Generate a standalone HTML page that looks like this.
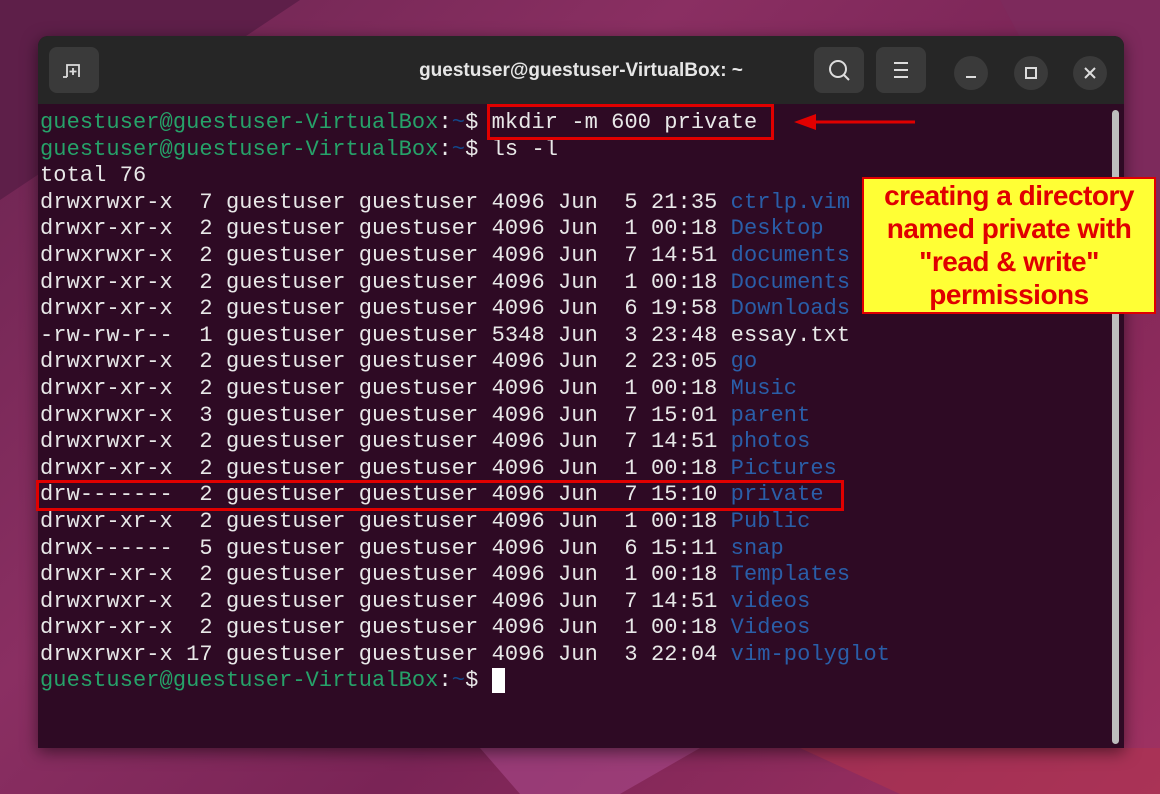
<!DOCTYPE html>
<html><head><meta charset="utf-8"><style>
html,body{margin:0;padding:0;width:1160px;height:794px;overflow:hidden}
body{background:linear-gradient(135deg,#6a2450 0%,#8a2f62 35%,#7a2456 60%,#a03262 100%);position:relative;font-family:"Liberation Sans",sans-serif}
.shape{position:absolute}
.win{position:absolute;left:38px;top:36px;width:1086px;height:712px;background:#2e0a24;border-radius:10px 10px 0 0;overflow:hidden;box-shadow:0 4px 16px rgba(0,0,0,.5)}
.hdr{position:absolute;left:0;top:0;width:100%;height:68px;background:#262626}
.btn{position:absolute;top:11px;width:50px;height:46px;background:#3a3a3a;border-radius:8px}
.cb{position:absolute;top:20px;width:34px;height:34px;border-radius:50%;background:#3a3a3a}
.title{position:absolute;left:0;width:100%;top:24px;text-align:center;color:#e6e6e6;font-weight:bold;font-size:19px}
pre{position:absolute;left:2px;top:74px;margin:0;font-family:"Liberation Mono",monospace;font-size:22px;letter-spacing:0.08px;line-height:26.6px;color:#e8e8e8}
.g{color:#26a269}.b{color:#12488b}.bl{color:#2a5ea8}
.scroll{position:absolute;left:1074px;top:74px;width:7px;height:634px;background:#bdbdbd;border-radius:4px}
.rb{position:absolute;border:3px solid #e00000}
.note{position:absolute;left:862px;top:177px;width:294px;height:137px;background:#ffff35;border:2px solid #e00000;color:#e00000;font-weight:bold;font-size:28px;line-height:33px;text-align:center;letter-spacing:-0.5px;font-family:"Liberation Sans Narrow","Liberation Sans",sans-serif;padding-top:0px;box-sizing:border-box}
</style></head><body>
<svg class="shape" width="1160" height="794" style="left:0;top:0">
<polygon points="0,0 300,0 0,200" fill="#5e1f49"/>
<polygon points="1160,0 1160,300 1000,0" fill="#7d2a5c"/>
<polygon points="480,748 700,748 620,794 520,794" fill="#a84a8a" opacity=".6"/>
<polygon points="800,748 1160,748 1160,794 900,794" fill="#b0344f" opacity=".6"/>
</svg>
<div class="win">
<div class="hdr">
<div class="btn" style="left:11px"><svg width="50" height="46"><path d="M18 30 V18 H30 V30" fill="none" stroke="#ddd" stroke-width="1.8"/><path d="M14 30h4M24 21v7M20.5 24.5h7" stroke="#ddd" stroke-width="1.8"/></svg></div>
<div class="title">guestuser@guestuser-VirtualBox: ~</div>
<div class="btn" style="left:776px"><svg width="50" height="46"><circle cx="24" cy="22" r="8" fill="none" stroke="#ddd" stroke-width="2"/><path d="M30 28l5 5" stroke="#ddd" stroke-width="2"/></svg></div>
<div class="btn" style="left:838px"><svg width="50" height="46"><path d="M18 16h14M18 23h14M18 30h14" stroke="#ddd" stroke-width="2"/></svg></div>
<div class="cb" style="left:916px"><svg width="34" height="34"><path d="M12 21h10" stroke="#ddd" stroke-width="2"/></svg></div>
<div class="cb" style="left:976px"><svg width="34" height="34"><rect x="12" y="12" width="10" height="10" fill="none" stroke="#ddd" stroke-width="2"/></svg></div>
<div class="cb" style="left:1035px"><svg width="34" height="34"><path d="M12 12l10 10M22 12l-10 10" stroke="#ddd" stroke-width="2"/></svg></div>
</div>
<pre><span class="g">guestuser@guestuser-VirtualBox</span>:<span class="b">~</span>$ mkdir -m 600 private
<span class="g">guestuser@guestuser-VirtualBox</span>:<span class="b">~</span>$ ls -l
total 76
drwxrwxr-x  7 guestuser guestuser 4096 Jun  5 21:35 <span class="bl">ctrlp.vim</span>
drwxr-xr-x  2 guestuser guestuser 4096 Jun  1 00:18 <span class="bl">Desktop</span>
drwxrwxr-x  2 guestuser guestuser 4096 Jun  7 14:51 <span class="bl">documents</span>
drwxr-xr-x  2 guestuser guestuser 4096 Jun  1 00:18 <span class="bl">Documents</span>
drwxr-xr-x  2 guestuser guestuser 4096 Jun  6 19:58 <span class="bl">Downloads</span>
-rw-rw-r--  1 guestuser guestuser 5348 Jun  3 23:48 essay.txt
drwxrwxr-x  2 guestuser guestuser 4096 Jun  2 23:05 <span class="bl">go</span>
drwxr-xr-x  2 guestuser guestuser 4096 Jun  1 00:18 <span class="bl">Music</span>
drwxrwxr-x  3 guestuser guestuser 4096 Jun  7 15:01 <span class="bl">parent</span>
drwxrwxr-x  2 guestuser guestuser 4096 Jun  7 14:51 <span class="bl">photos</span>
drwxr-xr-x  2 guestuser guestuser 4096 Jun  1 00:18 <span class="bl">Pictures</span>
drw-------  2 guestuser guestuser 4096 Jun  7 15:10 <span class="bl">private</span>
drwxr-xr-x  2 guestuser guestuser 4096 Jun  1 00:18 <span class="bl">Public</span>
drwx------  5 guestuser guestuser 4096 Jun  6 15:11 <span class="bl">snap</span>
drwxr-xr-x  2 guestuser guestuser 4096 Jun  1 00:18 <span class="bl">Templates</span>
drwxrwxr-x  2 guestuser guestuser 4096 Jun  7 14:51 <span class="bl">videos</span>
drwxr-xr-x  2 guestuser guestuser 4096 Jun  1 00:18 <span class="bl">Videos</span>
drwxrwxr-x 17 guestuser guestuser 4096 Jun  3 22:04 <span class="bl">vim-polyglot</span>
<span class="g">guestuser@guestuser-VirtualBox</span>:<span class="b">~</span>$ <span style="background:#fff">&nbsp;</span></pre>
<div class="scroll"></div>
</div>
<div class="rb" style="left:487px;top:104px;width:281px;height:30px"></div>
<div class="rb" style="left:36px;top:480px;width:802px;height:25px"></div>
<svg class="shape" style="left:790px;top:110px" width="130" height="24"><path d="M125 12H20" stroke="#e00000" stroke-width="3"/><polygon points="4,12 26,4 26,20" fill="#e00000"/></svg>
<div class="note">creating a directory<br>named private with<br>"read &amp; write"<br>permissions</div>
</body></html>
